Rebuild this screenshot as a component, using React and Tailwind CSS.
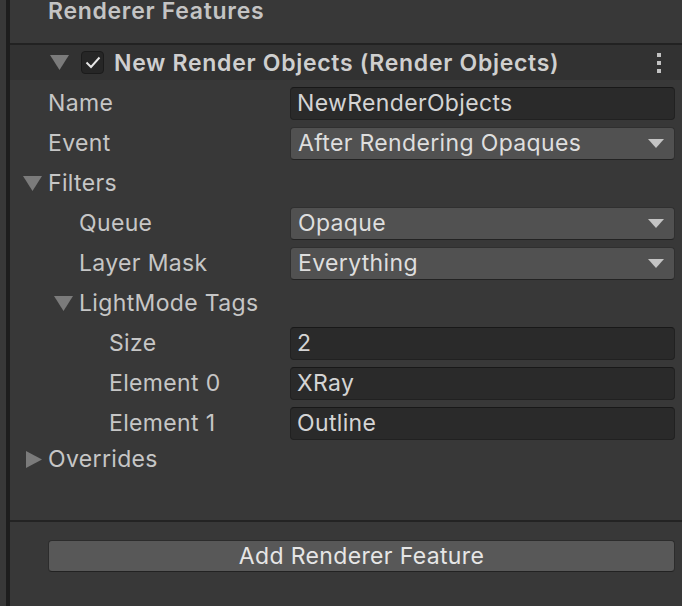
import React from 'react';

const FONT = "font-['Inter','Noto_Sans','Liberation_Sans',sans-serif]";

function Caret({ open, className = '' }) {
  // foldout arrow, down when open, right when closed
  return open ? (
    <svg width="19" height="15" viewBox="0 0 19 15" className={className}>
      <path d="M0 0 H19 L9.5 15 Z" fill="#7b7b7b" />
    </svg>
  ) : (
    <svg width="16" height="17" viewBox="0 0 16 17" className={className}>
      <path d="M0 0 L16 8.5 L0 17 Z" fill="#7b7b7b" />
    </svg>
  );
}

function TextField({ value }) {
  return (
    <div className="w-[385px] h-[33px] flex items-center pl-[6px] rounded-[4px] bg-[#2a2a2a] border border-[#212121] border-t-[#181818] text-[#d4d4d4]">
      {value}
    </div>
  );
}

function Dropdown({ value }) {
  return (
    <div className="w-[385px] h-[33px] flex items-center justify-between pl-[7px] pr-[10px] rounded-[4px] bg-[#515151] border border-[#303030] border-b-[#232323] text-[#dedede]">
      <span>{value}</span>
      <svg width="16" height="9" viewBox="0 0 16 9">
        <path d="M0 0 H16 L8 9 Z" fill="#c4c4c4" />
      </svg>
    </div>
  );
}

function Row({ label, indent, caret, children, h = 'h-[40px]' }) {
  return (
    <div className={`flex items-center pr-[7px] ${h}`}>
      <div className={`flex-1 flex items-center text-[#c6c6c6] ${indent}`}>
        {caret !== undefined && <Caret open={caret} className="mr-[6px]" />}
        <span>{label}</span>
      </div>
      {children}
    </div>
  );
}

export default function App() {
  return (
    <div className={`w-[682px] h-[606px] bg-[#383838] flex overflow-hidden text-[23px] leading-[22px] tracking-[0.35px] ${FONT}`}>
      <div className="w-[6px]" />
      <div className="w-[4px] bg-[#1d1d1d]" />
      <div className="flex-1 flex flex-col">
        <div className="h-[43px] pl-[38px] font-semibold tracking-[0.7px] text-[#c4c4c4]">Renderer Features</div>
        <div className="h-[2px] bg-[#222222]" />

        {/* feature header */}
        <div className="h-[35px] flex items-center bg-[#323232] pl-[40px] pr-[21px]">
          <Caret open className="mr-[12px]" />
          <div className="w-[23px] h-[23px] rounded-[4px] bg-[#262626] border border-[#1b1b1b] flex items-center justify-center mr-[10px]">
            <svg width="16" height="13" viewBox="0 0 16 13">
              <path d="M1.5 6.5 L6 11 L14.5 1.5" stroke="#e6e6e6" strokeWidth="1.9" fill="none" />
            </svg>
          </div>
          <span className="flex-1 font-semibold tracking-[0.7px] text-[#cfcfcf]">New Render Objects (Render Objects)</span>
          <div className="flex flex-col gap-[4px]">
            <div className="w-[4px] h-[4px] bg-[#c2c2c2]" />
            <div className="w-[4px] h-[4px] bg-[#c2c2c2]" />
            <div className="w-[4px] h-[4px] bg-[#c2c2c2]" />
          </div>
        </div>

        <div className="h-[3px]" />
        <Row label="Name" indent="pl-[38px]">
          <TextField value="NewRenderObjects" />
        </Row>
        <Row label="Event" indent="pl-[38px]">
          <Dropdown value="After Rendering Opaques" />
        </Row>
        <Row label="Filters" indent="pl-[13px]" caret={true} />
        <Row label="Queue" indent="pl-[69px]">
          <Dropdown value="Opaque" />
        </Row>
        <Row label="Layer Mask" indent="pl-[69px]">
          <Dropdown value="Everything" />
        </Row>
        <Row label="LightMode Tags" indent="pl-[44px]" caret={true} />
        <Row label="Size" indent="pl-[99px]">
          <TextField value="2" />
        </Row>
        <Row label="Element 0" indent="pl-[99px]">
          <TextField value="XRay" />
        </Row>
        <Row label="Element 1" indent="pl-[99px]">
          <TextField value="Outline" />
        </Row>
        <Row label="Overrides" indent="pl-[16px]" caret={false} h="h-[32px]" />

        <div className="flex-1" />
        <div className="h-[2px] bg-[#232323]" />
        <div className="h-[84px] pt-[18px] pl-[38px] pr-[7px]">
          <div className="h-[32px] rounded-[4px] bg-[#585858] border border-[#2c2c2c] border-b-[#222222] flex items-center justify-center text-[#e6e6e6]">
            Add Renderer Feature
          </div>
        </div>
      </div>
    </div>
  );
}
